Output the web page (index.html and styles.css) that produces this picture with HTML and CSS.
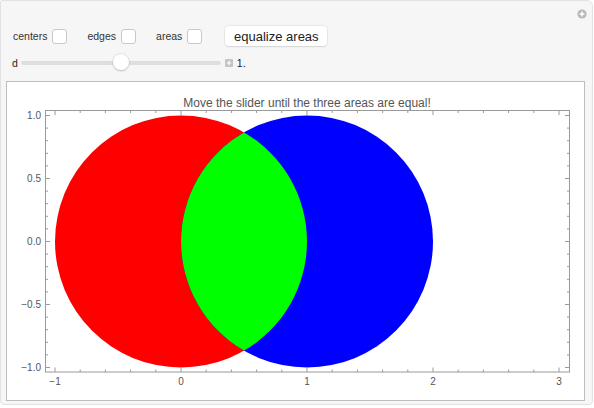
FILE: index.html
```html
<!DOCTYPE html>
<html>
<head>
<meta charset="utf-8">
<link rel="stylesheet" href="styles.css">
</head>
<body>
<div class="panel">
  <svg class="corner-btn" width="10" height="10" viewBox="0 0 10 10"><circle cx="5" cy="5" r="4.6" fill="#b8b8b8"/><path d="M5 2.6v4.8M2.6 5h4.8" stroke="#fff" stroke-width="1.6"/></svg>
  <div class="controls">
    <div class="opt"><span>centers</span><span class="box"></span></div>
    <div class="opt"><span>edges</span><span class="box"></span></div>
    <div class="opt"><span>areas</span><span class="box"></span></div>
    <button class="btn">equalize areas</button>
  </div>
  <div class="slider-row">
    <span class="var">d</span>
    <div class="slider"><div class="track"></div><div class="thumb"></div></div>
    <svg class="plus" width="8" height="8" viewBox="0 0 8 8"><rect width="8" height="8" rx="1" fill="#c4c4c4"/><path d="M4 1.8v4.4M1.8 4h4.4" stroke="#fff" stroke-width="1.2"/></svg>
    <span class="val">1.</span>
  </div>
  <div class="plot">
    <svg class="chart" width="577" height="318" viewBox="7 82 577 318">
      <circle cx="181" cy="241.5" r="126" fill="#ff0000"/>
      <circle cx="307" cy="241.5" r="126" fill="#0000ff"/>
      <path d="M244 132.4A126 126 0 0 1 244 350.6A126 126 0 0 1 244 132.4Z" fill="#00ff00"/>
      <rect x="45.5" y="110.5" width="524" height="261.5" fill="none" stroke="#9a9a9a" stroke-width="1"/>
      <g stroke="#9a9a9a" stroke-width="1" fill="none">
        <path d="M55 372v-4.5M181 372v-4.5M307 372v-4.5M433 372v-4.5M559 372v-4.5M55 110.5v4.5M181 110.5v4.5M307 110.5v4.5M433 110.5v4.5M559 110.5v4.5"/>
        <path d="M80.2 372v-2.5M105.4 372v-2.5M130.6 372v-2.5M155.8 372v-2.5M206.2 372v-2.5M231.4 372v-2.5M256.6 372v-2.5M281.8 372v-2.5M332.2 372v-2.5M357.4 372v-2.5M382.6 372v-2.5M407.8 372v-2.5M458.2 372v-2.5M483.4 372v-2.5M508.6 372v-2.5M533.8 372v-2.5"/>
        <path d="M80.2 110.5v2.5M105.4 110.5v2.5M130.6 110.5v2.5M155.8 110.5v2.5M206.2 110.5v2.5M231.4 110.5v2.5M256.6 110.5v2.5M281.8 110.5v2.5M332.2 110.5v2.5M357.4 110.5v2.5M382.6 110.5v2.5M407.8 110.5v2.5M458.2 110.5v2.5M483.4 110.5v2.5M508.6 110.5v2.5M533.8 110.5v2.5"/>
        <path d="M45.5 115.5h4.5M45.5 178.5h4.5M45.5 241.5h4.5M45.5 304.5h4.5M45.5 367.5h4.5M569.5 115.5h-4.5M569.5 178.5h-4.5M569.5 241.5h-4.5M569.5 304.5h-4.5M569.5 367.5h-4.5"/>
        <path d="M45.5 128.1h2.5M45.5 140.7h2.5M45.5 153.3h2.5M45.5 165.9h2.5M45.5 191.1h2.5M45.5 203.7h2.5M45.5 216.3h2.5M45.5 228.9h2.5M45.5 254.1h2.5M45.5 266.7h2.5M45.5 279.3h2.5M45.5 291.9h2.5M45.5 317.1h2.5M45.5 329.7h2.5M45.5 342.3h2.5M45.5 354.9h2.5"/>
        <path d="M569.5 128.1h-2.5M569.5 140.7h-2.5M569.5 153.3h-2.5M569.5 165.9h-2.5M569.5 191.1h-2.5M569.5 203.7h-2.5M569.5 216.3h-2.5M569.5 228.9h-2.5M569.5 254.1h-2.5M569.5 266.7h-2.5M569.5 279.3h-2.5M569.5 291.9h-2.5M569.5 317.1h-2.5M569.5 329.7h-2.5M569.5 342.3h-2.5M569.5 354.9h-2.5"/>
      </g>
      <g class="ticklbl" text-anchor="middle">
        <text x="55" y="385">−1</text>
        <text x="181" y="385">0</text>
        <text x="307" y="385">1</text>
        <text x="433" y="385">2</text>
        <text x="559" y="385">3</text>
      </g>
      <g class="ticklbl" text-anchor="end">
        <text x="41" y="119">1.0</text>
        <text x="41" y="182">0.5</text>
        <text x="41" y="245">0.0</text>
        <text x="41" y="308">−0.5</text>
        <text x="41" y="371">−1.0</text>
      </g>
      <text class="title" x="307" y="107" text-anchor="middle">Move the slider until the three areas are equal!</text>
    </svg>
  </div>
</div>
</body>
</html>
```

FILE: styles.css
```css
html, body {
  margin: 0;
  padding: 0;
  background: #ffffff;
}
body {
  font-family: "Liberation Sans", Arial, sans-serif;
}
.panel {
  position: relative;
  width: 593px;
  height: 405px;
  box-sizing: border-box;
  border: 1px solid #e2e2e2;
  border-radius: 2px 6px 4px 4px;
  background: #f6f6f6;
  padding-top: 25px;
}
.corner-btn {
  position: absolute;
  top: 8px;
  right: 5px;
}
.controls {
  display: flex;
  align-items: center;
  height: 20px;
  padding-left: 12px;
}
.opt {
  display: flex;
  align-items: center;
  gap: 5px;
  font-size: 10.5px;
  color: #333;
}
.opt + .opt {
  margin-left: 20px;
}
.box {
  width: 13px;
  height: 13px;
  border: 1px solid #c9c9c9;
  border-radius: 3px;
  background: #fff;
}
.btn {
  margin-left: 23px;
  width: 102px;
  height: 20px;
  padding: 0;
  border: none;
  border-radius: 4px;
  background: #fff;
  box-shadow: 0 0 0 0.5px #d8d8d8, 0 1px 1.5px rgba(0,0,0,0.12);
  font-family: "Liberation Sans", Arial, sans-serif;
  font-size: 13px;
  color: #222;
}
.slider-row {
  display: flex;
  align-items: center;
  height: 17px;
  margin-top: 8px;
  padding-left: 11px;
}
.var, .val {
  font-size: 10.5px;
  color: #222;
}
.slider {
  position: relative;
  width: 200px;
  height: 17px;
  margin-left: 3px;
  display: flex;
  align-items: center;
}
.track {
  width: 100%;
  height: 4px;
  border-radius: 2px;
  background: #dedede;
}
.thumb {
  position: absolute;
  left: 92px;
  top: 0;
  width: 16px;
  height: 16px;
  border-radius: 50%;
  background: #fff;
  box-shadow: 0 0 0 0.5px #cfcfcf, 0 1px 2px rgba(0,0,0,0.25);
}
.plus {
  margin-left: 4px;
}
.val {
  margin-left: 4px;
}
.plot {
  margin-top: 10px;
  margin-left: 5px;
  width: 579px;
  height: 320px;
  box-sizing: border-box;
  border: 1px solid #bdbdbd;
  background: #fff;
}
.chart {
  display: block;
}
.ticklbl text {
  font-family: "Liberation Sans", Arial, sans-serif;
  font-size: 10px;
  fill: #555;
}
.title {
  font-family: "Liberation Sans", Arial, sans-serif;
  font-size: 12px;
  fill: #555;
}
```
